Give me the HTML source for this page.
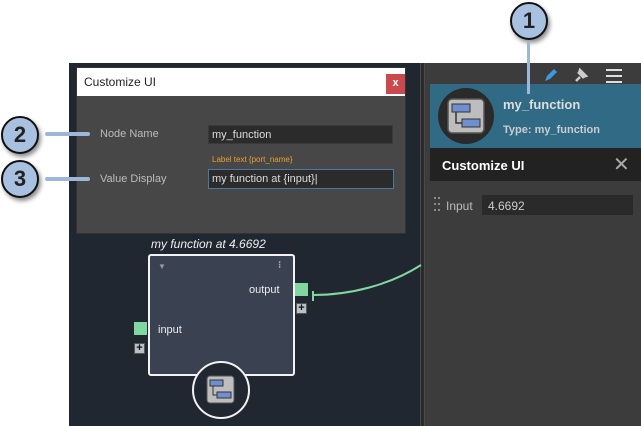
<!DOCTYPE html>
<html><head><style>
body{margin:0;width:641px;height:426px;background:#fff;position:relative;overflow:hidden;font-family:"Liberation Sans",sans-serif}
div,span{position:absolute;box-sizing:border-box}
.callout{width:38px;height:38px;border-radius:50%;background:#a9c1e0;border:2px solid #111;box-shadow:2px 3px 4px rgba(0,0,0,.45);font:bold 22px "Liberation Sans",sans-serif;color:#222;text-align:center;line-height:34px}
.line{background:#9db7d8;height:4px;border-radius:2px}
</style></head><body>
<div style="left:69px;top:63px;width:352px;height:363px;background:#212730"></div>
<div style="left:420px;top:63px;width:5px;height:363px;background:#2a2a2a;border-left:1px solid #4a4a4a;border-right:1px solid #4a4a4a"></div>
<div style="left:425px;top:63px;width:216px;height:363px;background:#3c3c3c"></div>
<svg style="position:absolute;left:540px;top:66px" width="100" height="18">
<path d="M5 15 L7 10 L14 3 L17 6 L10 13 Z" fill="#3b9be0"/>
<path d="M36 15 L40 11 M38 6 L44 12 M40 4 L46 10 L43 11 L39 7 Z" stroke="#ccc" stroke-width="2.5" fill="#ccc"/>
<rect x="66" y="3" width="16" height="2" fill="#ddd"/><rect x="66" y="9" width="16" height="2" fill="#ddd"/><rect x="66" y="15" width="16" height="2" fill="#ddd"/>
</svg>
<div style="left:430px;top:84px;width:211px;height:64px;background:#306a84"></div>
<div style="left:438px;top:88px;width:56px;height:56px;border-radius:50%;background:#2a2a2a"></div>
<svg style="position:absolute;left:447px;top:98px" width="38" height="36"><rect x="1" y="1" width="36" height="34" rx="4" fill="#bdbdbd" stroke="#555" stroke-width="1.5"/><rect x="5" y="6" width="18" height="8" fill="#6f8fd0" stroke="#333"/><rect x="15" y="21" width="18" height="8" fill="#6f8fd0" stroke="#333"/><path d="M9 14 V25 H15" stroke="#333" fill="none" stroke-width="1.5"/></svg>
<span style="left:503px;top:97px;font-weight:bold;font-size:13px;color:#ddd">my_function</span>
<span style="left:503px;top:124px;font-weight:bold;font-size:11px;color:#ccc">Type: my_function</span>
<div style="left:430px;top:148px;width:211px;height:33px;background:#222"></div>
<span style="left:442px;top:158px;font-weight:bold;font-size:13px;color:#fff">Customize UI</span>
<span style="left:613px;top:152px;font-size:20px;color:#aaa">✕</span>
<svg style="position:absolute;left:434px;top:197px" width="8" height="16"><g fill="#888"><rect x="0" y="0" width="2" height="2"/><rect x="4" y="0" width="2" height="2"/><rect x="0" y="6" width="2" height="2"/><rect x="4" y="6" width="2" height="2"/><rect x="0" y="12" width="2" height="2"/><rect x="4" y="12" width="2" height="2"/></g></svg>
<span style="left:446px;top:199px;font-size:12px;color:#bbb">Input</span>
<div style="left:482px;top:195px;width:151px;height:20px;background:#2a2a2a"></div>
<span style="left:488px;top:199px;font-size:12px;color:#ccc">4.6692</span>
<div class="callout" style="left:510px;top:2px">1</div>
<div style="left:527px;top:42px;width:3px;height:52px;background:#9db7d8"></div>
<div style="left:76px;top:67px;width:330px;height:167px;background:#474747;border:1px solid #333"></div>
<div style="left:77px;top:68px;width:328px;height:28px;background:#fff"></div>
<span style="left:84px;top:75px;font-size:12px;color:#222">Customize UI</span>
<div style="left:386px;top:74px;width:19px;height:20px;background:#c9494d;color:#fff;font-size:11px;font-weight:bold;text-align:center;line-height:19px">x</div>
<span style="left:100px;top:128px;font-size:11px;color:#bbb">Node Name</span>
<div style="left:208px;top:125px;width:185px;height:19px;background:#2b2b2b;border:1px solid #3a3a3a"></div>
<span style="left:212px;top:129px;font-size:11px;color:#ddd">my_function</span>
<span style="left:212px;top:155px;font-size:8px;color:#e8a030">Label text {port_name}</span>
<span style="left:100px;top:173px;font-size:11px;color:#bbb">Value Display</span>
<div style="left:208px;top:169px;width:186px;height:20px;background:#2b2b2b;border:1px solid #4a7aa0"></div>
<span style="left:212px;top:173px;font-size:11px;color:#ddd">my function at {input}|</span>
<div class="callout" style="left:1px;top:116px">2</div>
<div class="line" style="left:45px;top:132px;width:45px"></div>
<div class="callout" style="left:1px;top:160px">3</div>
<div class="line" style="left:45px;top:177px;width:45px"></div>
<span style="left:151px;top:237px;font-size:12px;font-style:italic;color:#eee">my function at 4.6692</span>
<div style="left:148px;top:254px;width:147px;height:122px;background:#3a4150;border:2.5px solid #f2f2f2;border-radius:3px"></div>
<span style="left:158px;top:262px;font-size:8px;color:#999">▼</span>
<span style="left:278px;top:260px;font-size:10px;color:#aaa;font-weight:bold">⁝</span>
<span style="left:249px;top:284px;font-size:11px;color:#eee">output</span>
<span style="left:158px;top:324px;font-size:11px;color:#eee">input</span>
<div style="left:295px;top:283px;width:13px;height:13px;background:#80d8a0"></div>
<div style="left:296px;top:303px;width:11px;height:11px;background:#b8c0c8;border:1px solid #555;font-size:11px;font-weight:bold;line-height:8px;text-align:center;color:#111">+</div>
<div style="left:134px;top:322px;width:13px;height:13px;background:#80d8a0"></div>
<div style="left:134px;top:343px;width:11px;height:11px;background:#b8c0c8;border:1px solid #555;font-size:11px;font-weight:bold;line-height:8px;text-align:center;color:#111">+</div>
<svg style="position:absolute;left:310px;top:255px" width="112" height="50"><path d="M3 36 V46 M3 40 C40 40 80 30 111 10" stroke="#80d8a0" stroke-width="2" fill="none"/></svg>
<div style="left:192px;top:361px;width:58px;height:58px;border-radius:50%;background:#212730;border:2.5px solid #f2f2f2"></div>
<svg style="position:absolute;left:206px;top:375px" width="30" height="30"><rect x="1" y="1" width="27" height="27" rx="3" fill="#bdbdbd" stroke="#555"/><rect x="4" y="5" width="13" height="6" fill="#6f8fd0" stroke="#333"/><rect x="11" y="17" width="14" height="6" fill="#6f8fd0" stroke="#333"/><path d="M7 11 V20 H11" stroke="#333" fill="none"/></svg>
</body></html>
